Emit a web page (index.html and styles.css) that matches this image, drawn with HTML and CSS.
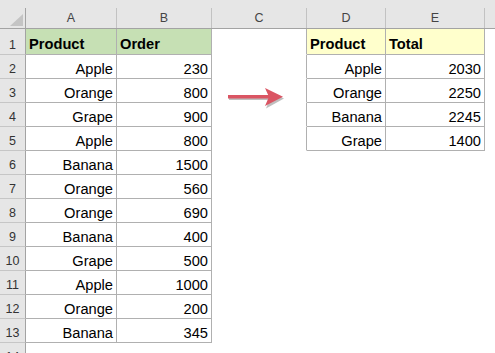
FILE: index.html
```html
<!DOCTYPE html>
<html>
<head>
<meta charset="utf-8">
<link rel="stylesheet" href="styles.css">
</head>
<body>
<div class="sheet">
  <div class="hc corner"><span><i class="tri"></i></span></div>
  <div class="hc"><span>A</span></div>
  <div class="hc"><span>B</span></div>
  <div class="hc"><span>C</span></div>
  <div class="hc"><span>D</span></div>
  <div class="hc"><span>E</span></div>
  <div class="hc last"><span></span></div>

  <div class="rh r1">1</div>
  <div class="c g hd green">Product</div>
  <div class="c g hd green">Order</div>
  <div class="c edge"></div>
  <div class="c g hd yellow">Product</div>
  <div class="c g hd yellow">Total</div>
  <div class="c"></div>

  <div class="rh">2</div>
  <div class="c g">Apple</div><div class="c g">230</div>
  <div class="c edge"></div>
  <div class="c g">Apple</div><div class="c g">2030</div>
  <div class="c"></div>

  <div class="rh">3</div>
  <div class="c g">Orange</div><div class="c g">800</div>
  <div class="c edge"></div>
  <div class="c g">Orange</div><div class="c g">2250</div>
  <div class="c"></div>

  <div class="rh">4</div>
  <div class="c g">Grape</div><div class="c g">900</div>
  <div class="c edge"></div>
  <div class="c g">Banana</div><div class="c g">2245</div>
  <div class="c"></div>

  <div class="rh">5</div>
  <div class="c g">Apple</div><div class="c g">800</div>
  <div class="c edge"></div>
  <div class="c g">Grape</div><div class="c g">1400</div>
  <div class="c"></div>

  <div class="rh">6</div>
  <div class="c g">Banana</div><div class="c g">1500</div>
  <div class="c"></div><div class="c"></div><div class="c"></div><div class="c"></div>

  <div class="rh">7</div>
  <div class="c g">Orange</div><div class="c g">560</div>
  <div class="c"></div><div class="c"></div><div class="c"></div><div class="c"></div>

  <div class="rh">8</div>
  <div class="c g">Orange</div><div class="c g">690</div>
  <div class="c"></div><div class="c"></div><div class="c"></div><div class="c"></div>

  <div class="rh">9</div>
  <div class="c g">Banana</div><div class="c g">400</div>
  <div class="c"></div><div class="c"></div><div class="c"></div><div class="c"></div>

  <div class="rh">10</div>
  <div class="c g">Grape</div><div class="c g">500</div>
  <div class="c"></div><div class="c"></div><div class="c"></div><div class="c"></div>

  <div class="rh">11</div>
  <div class="c g">Apple</div><div class="c g">1000</div>
  <div class="c"></div><div class="c"></div><div class="c"></div><div class="c"></div>

  <div class="rh">12</div>
  <div class="c g">Orange</div><div class="c g">200</div>
  <div class="c"></div><div class="c"></div><div class="c"></div><div class="c"></div>

  <div class="rh">13</div>
  <div class="c g">Banana</div><div class="c g">345</div>
  <div class="c"></div><div class="c"></div><div class="c"></div><div class="c"></div>

  <div class="rh">14</div>
  <div class="c"></div><div class="c"></div><div class="c"></div><div class="c"></div><div class="c"></div><div class="c"></div>

  <svg class="arrow" width="62" height="26" viewBox="0 0 62 26">
    <g fill="#8c8c8c" opacity="0.55" transform="translate(1,1.5)">
      <rect x="3" y="9" width="43" height="3.5"/>
      <polygon points="40,2 58,11 40,21 44,11"/>
    </g>
    <g fill="#da5563">
      <rect x="3" y="9" width="43" height="3.5"/>
      <polygon points="40,2 58,10.8 40,20 44,10.8"/>
    </g>
  </svg>
</div>
</body>
</html>
```
FILE: styles.css
```css
html, body {
  margin: 0;
  padding: 0;
  background: #ffffff;
  overflow: hidden;
}

.sheet {
  position: relative;
  display: grid;
  grid-template-columns: 26px 91px 95px 95px 79px 99px 1fr;
  grid-template-rows: 29px 26px repeat(13, 24px);
  width: 495px;
  height: 353px;
  overflow: hidden;
  font-family: "Liberation Sans", Arial, sans-serif;
  font-size: 14.67px;
  color: #000;
}

.hc {
  box-sizing: border-box;
  background: #e6e6e6;
  padding-top: 8px;
  border-bottom: 1px solid #a3a3a3;
  display: flex;
}

.hc span {
  flex: 1;
  box-sizing: border-box;
  border-right: 1px solid #c2c2c2;
  display: flex;
  align-items: flex-end;
  justify-content: center;
  padding-bottom: 3px;
  font-size: 12.5px;
  line-height: 14px;
  color: #444;
}

.hc.corner span {
  border-right-color: #a3a3a3;
  position: relative;
}

.hc.last span {
  border-right: none;
}

.tri {
  position: absolute;
  right: 2px;
  bottom: 2px;
  width: 0;
  height: 0;
  border-left: 13px solid transparent;
  border-bottom: 12px solid #c4c4c4;
}

.rh {
  box-sizing: border-box;
  background: #e6e6e6;
  border-right: 1px solid #a3a3a3;
  border-bottom: 1px solid #c6c6c6;
  display: flex;
  align-items: flex-end;
  justify-content: center;
  padding-bottom: 1px;
  font-size: 12.5px;
  line-height: 16px;
  color: #333;
}

.c {
  box-sizing: border-box;
  border-right: 1px solid transparent;
  border-bottom: 1px solid transparent;
  display: flex;
  align-items: flex-end;
  justify-content: flex-end;
  padding: 0 3px 1px 3px;
  line-height: 16px;
  white-space: nowrap;
}

.c.g {
  border-right-color: #b0b0b0;
  border-bottom-color: #b0b0b0;
}

.c.edge {
  border-right-color: #b0b0b0;
}

.c.hd {
  justify-content: flex-start;
  font-weight: bold;
  padding-bottom: 2px;
}

.green {
  background: #c6e0b4;
}

.yellow {
  background: #ffffcc;
}

.arrow {
  position: absolute;
  left: 225px;
  top: 86px;
}
```
